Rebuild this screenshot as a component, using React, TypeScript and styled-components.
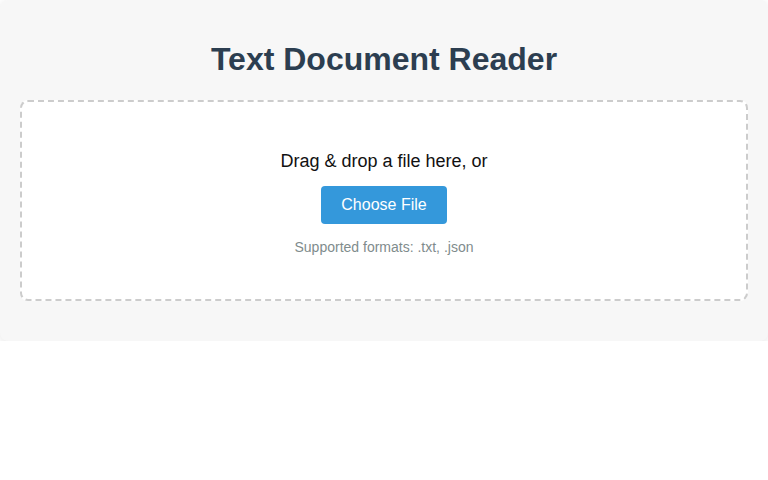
import React from "react";
import styled, { createGlobalStyle } from "styled-components";

const GlobalStyle = createGlobalStyle`
  html, body {
    margin: 0;
    padding: 0;
    background: #ffffff;
    font-family: "Liberation Sans", Arial, sans-serif;
  }
`;

const Container = styled.div`
  background: #f7f7f7;
  padding: 20px 20px 40px;
  border-radius: 8px;
  box-shadow: 0 2px 10px rgba(0, 0, 0, 0.1);
`;

const Title = styled.h1`
  margin: 21px 0 22px;
  text-align: center;
  font-size: 32px;
  font-weight: 700;
  color: #2c3e50;
  line-height: 37px;
`;

const DropZone = styled.div`
  display: flex;
  flex-direction: column;
  align-items: center;
  background: #ffffff;
  border: 2px dashed #cccccc;
  border-radius: 8px;
  padding: 49px 20px 44px;
`;

const Prompt = styled.p`
  margin: 0;
  font-size: 18px;
  line-height: 21px;
  color: #111;
`;

const ChooseButton = styled.button`
  margin: 14px 0 15px;
  width: 126px;
  height: 38px;
  border: none;
  border-radius: 4px;
  background: #3498db;
  color: #ffffff;
  font-family: "Liberation Sans", Arial, sans-serif;
  font-size: 16px;
  cursor: pointer;
`;

const Formats = styled.p`
  margin: 0;
  font-size: 14px;
  line-height: 16px;
  color: #7f8c8d;
`;

export default function App() {
  return (
    <>
      <GlobalStyle />
      <Container>
        <Title>Text Document Reader</Title>
        <DropZone>
          <Prompt>Drag &amp; drop a file here, or</Prompt>
          <ChooseButton type="button">Choose File</ChooseButton>
          <Formats>Supported formats: .txt, .json</Formats>
        </DropZone>
      </Container>
    </>
  );
}
